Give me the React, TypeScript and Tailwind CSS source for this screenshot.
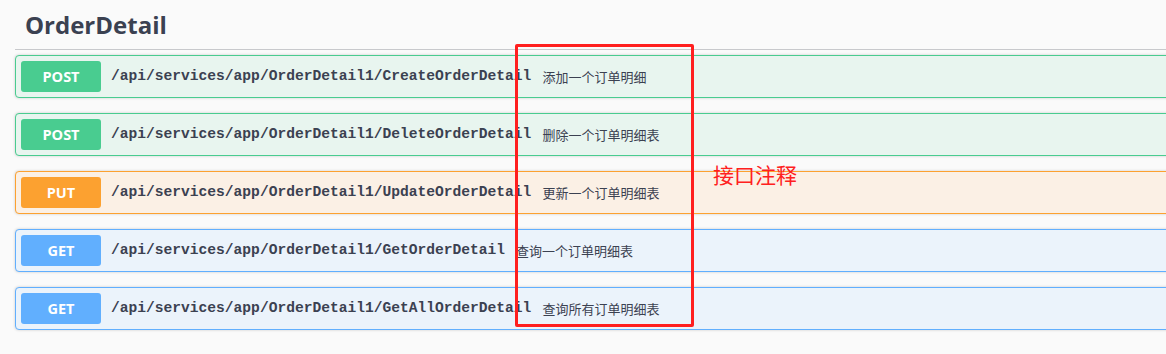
import React from "react";

type Op = {
  method: "POST" | "PUT" | "GET";
  path: string;
  summary: string;
};

const ops: Op[] = [
  { method: "POST", path: "/api/services/app/OrderDetail1/CreateOrderDetail", summary: "添加一个订单明细" },
  { method: "POST", path: "/api/services/app/OrderDetail1/DeleteOrderDetail", summary: "删除一个订单明细表" },
  { method: "PUT", path: "/api/services/app/OrderDetail1/UpdateOrderDetail", summary: "更新一个订单明细表" },
  { method: "GET", path: "/api/services/app/OrderDetail1/GetOrderDetail", summary: "查询一个订单明细表" },
  { method: "GET", path: "/api/services/app/OrderDetail1/GetAllOrderDetail", summary: "查询所有订单明细表" },
];

const styles = {
  POST: { row: "bg-[#e8f5ef] border-[#49cc90]", badge: "bg-[#49cc90]" },
  PUT: { row: "bg-[#fbf0e5] border-[#fca130]", badge: "bg-[#fca130]" },
  GET: { row: "bg-[#ebf3fb] border-[#61affe]", badge: "bg-[#61affe]" },
};

function OpBlock({ op }: { op: Op }) {
  const s = styles[op.method];
  return (
    <div
      className={`flex h-[43px] items-center rounded-[4px] border px-[5px] shadow-[0_0_3px_rgba(0,0,0,0.19)] ${s.row}`}
    >
      <span
        className={`flex h-[31px] w-[80px] shrink-0 items-center justify-center rounded-[3px] text-[14.5px] font-bold text-white ${s.badge}`}
        style={{ fontFamily: '"Open Sans", "Liberation Sans", sans-serif' }}
      >
        {op.method}
      </span>
      <span
        className="whitespace-nowrap pl-[10px] pr-[11px] text-[14.6px] font-bold text-[#3b4151]"
        style={{ fontFamily: '"Liberation Mono", "DejaVu Sans Mono", monospace' }}
      >
        {op.path}
      </span>
      <span
        className="whitespace-nowrap text-[13px] text-[#3b4151]"
        style={{ fontFamily: '"Noto Sans CJK SC", "Noto Sans", sans-serif' }}
      >
        {op.summary}
      </span>
    </div>
  );
}

export default function App() {
  return (
    <div className="relative h-[354px] w-[1166px] overflow-hidden bg-[#fafafa]">
      <div className="ml-[15px] w-[1180px]">
        {/* Tag header */}
        <div className="border-b border-[#c8c9cc] pb-[6px] pl-[10px] pt-[6px]">
          <h4
            className="text-[24px] font-bold leading-[37px] text-[#3b4151]"
            style={{ fontFamily: '"Open Sans", "Liberation Sans", sans-serif' }}
          >
            OrderDetail
          </h4>
        </div>

        <div className="mt-[5px] flex flex-col gap-[15px]">
          {ops.map((op) => (
            <OpBlock key={op.path} op={op} />
          ))}
        </div>
      </div>

      {/* Annotation overlay */}
      <div className="pointer-events-none absolute left-[515px] top-[44px] h-[283px] w-[179px] rounded-[2px] border-[3px] border-[#ff1f1f]" />
      <span
        className="absolute left-[713px] top-[160px] text-[21px] leading-[28px] text-[#ff2020]"
        style={{ fontFamily: '"Noto Sans CJK SC", sans-serif' }}
      >
        接口注释
      </span>
    </div>
  );
}
